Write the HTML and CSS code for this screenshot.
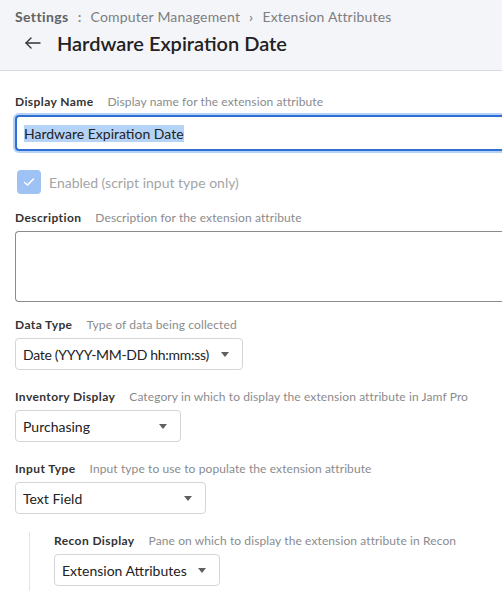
FILE: index.html
```html
<!DOCTYPE html>
<html lang="en">
<head>
  <meta charset="UTF-8">
  <title>Hardware Expiration Date</title>
  <link rel="stylesheet" href="styles.css">
</head>
<body>
  <div class="page-header">
    <div class="breadcrumb">
      <span class="crumb-root">Settings</span>
      <span class="crumb-sep">:</span>
      <span>Computer Management</span>
      <span class="crumb-sep">&rsaquo;</span>
      <span>Extension Attributes</span>
    </div>
    <div class="page-title">
      <svg class="back" width="16" height="12" viewBox="0 0 16 12" fill="none" stroke="currentColor" stroke-width="1.4" stroke-linecap="round" stroke-linejoin="round">
        <line x1="1" y1="6" x2="15" y2="6"></line>
        <polyline points="6,1 1,6 6,11"></polyline>
      </svg>
      <h1>Hardware Expiration Date</h1>
    </div>
  </div>

  <form class="form">
    <div class="field field-name">
      <div class="field-label"><b>Display Name</b><span>Display name for the extension attribute</span></div>
      <div class="text-input focused"><span class="selected">Hardware Expiration Date</span></div>
    </div>

    <label class="checkbox">
      <span class="box">
        <svg width="12" height="10" viewBox="0 0 12 10" fill="none" stroke="white" stroke-width="1.6" stroke-linecap="round" stroke-linejoin="round">
          <polyline points="1.5,5.5 4.5,8 10.5,2"></polyline>
        </svg>
      </span>
      Enabled (script input type only)
    </label>

    <div class="field field-desc">
      <div class="field-label"><b>Description</b><span>Description for the extension attribute</span></div>
      <div class="textarea"></div>
    </div>

    <div class="field">
      <div class="field-label"><b>Data Type</b><span>Type of data being collected</span></div>
      <div class="select w-date"><span class="condensed">Date (YYYY-MM-DD hh:mm:ss)</span><i class="caret"></i></div>
    </div>

    <div class="field">
      <div class="field-label"><b>Inventory Display</b><span>Category in which to display the extension attribute in Jamf Pro</span></div>
      <div class="select w-purchasing">Purchasing<i class="caret"></i></div>
    </div>

    <div class="field">
      <div class="field-label"><b>Input Type</b><span>Input type to use to populate the extension attribute</span></div>
      <div class="select w-text">Text Field<i class="caret"></i></div>
    </div>

    <div class="nested">
      <div class="field">
        <div class="field-label"><b>Recon Display</b><span>Pane on which to display the extension attribute in Recon</span></div>
        <div class="select w-recon">Extension Attributes<i class="caret"></i></div>
      </div>
    </div>
  </form>
</body>
</html>
```

FILE: styles.css
```css
body {
  margin: 0;
  font-family: Lato, "Open Sans", sans-serif;
  background-color: white;
  color: #222;
  width: 502px;
  overflow: hidden;
}
.page-header {
  background-color: #f4f5f8;
  border-bottom: 1px solid #d9dadd;
  height: 71px;
  box-sizing: border-box;
  padding: 7px 15px 0;
}
.breadcrumb {
  display: flex;
  align-items: center;
  gap: 9px;
  font-size: 14px;
  letter-spacing: 0.2px;
  color: #7d7e81;
  height: 18px;
}
.crumb-root {
  font-weight: 700;
  color: #616264;
  letter-spacing: 0.4px;
}
.crumb-sep {
  font-weight: 700;
  color: #8a8b8e;
}
.page-title {
  display: flex;
  align-items: center;
  height: 34px;
  margin-top: 1px;
  padding-left: 10px;
  gap: 16px;
}
.back {
  color: #333;
}
.page-title h1 {
  margin: 0;
  font-size: 20px;
  font-weight: 600;
  color: #222;
}
.form {
  padding: 22px 0 0 15px;
}
.field {
  margin-bottom: 18px;
}
.field-name {
  margin-bottom: 19px;
}
.field-desc {
  margin-bottom: 14px;
}
.field-label {
  font-size: 12px;
  letter-spacing: 0.1px;
  height: 17px;
  line-height: 17px;
  margin-bottom: 5px;
  color: #8a8b8e;
  white-space: nowrap;
}
.field-label b {
  color: #333;
  font-weight: 700;
  margin-right: 14px;
  letter-spacing: 0.4px;
}
.text-input {
  height: 36px;
  box-sizing: border-box;
  border: 2px solid #2d6fd5;
  border-right: none;
  border-radius: 4px 0 0 4px;
  box-shadow: 0 0 0 2px #b5d1f5;
  padding: 0 7px;
  display: flex;
  align-items: center;
  font-size: 14px;
  margin-right: -4px;
}
.selected {
  background-color: #b4d3f7;
}
.checkbox {
  display: flex;
  align-items: center;
  gap: 8px;
  font-size: 14px;
  color: #a4a5a8;
  margin: 0 0 15px 2px;
}
.box {
  width: 24px;
  height: 24px;
  border-radius: 4px;
  background-color: #9fc2f5;
  display: flex;
  align-items: center;
  justify-content: center;
}
.textarea {
  height: 71px;
  box-sizing: border-box;
  border: 1px solid #8a8b8e;
  border-right: none;
  border-radius: 4px 0 0 4px;
}
.select {
  height: 32px;
  box-sizing: border-box;
  border: 1px solid #d4d5d8;
  border-radius: 4px;
  display: flex;
  align-items: center;
  justify-content: space-between;
  padding: 0 13px 0 7px;
  font-size: 14px;
  color: #222;
}
.condensed {
  letter-spacing: -0.3px;
}
.caret {
  width: 0;
  height: 0;
  border-left: 4.5px solid transparent;
  border-right: 4.5px solid transparent;
  border-top: 5px solid #5e6066;
}
.w-date { width: 228px; }
.w-purchasing { width: 166px; }
.w-text { width: 191px; }
.w-recon { width: 166px; }
.nested {
  margin-left: 14px;
  border-left: 1px solid #e3e4e6;
  padding: 0 0 5px 24px;
}
.nested .field {
  margin-bottom: 0;
}
```
